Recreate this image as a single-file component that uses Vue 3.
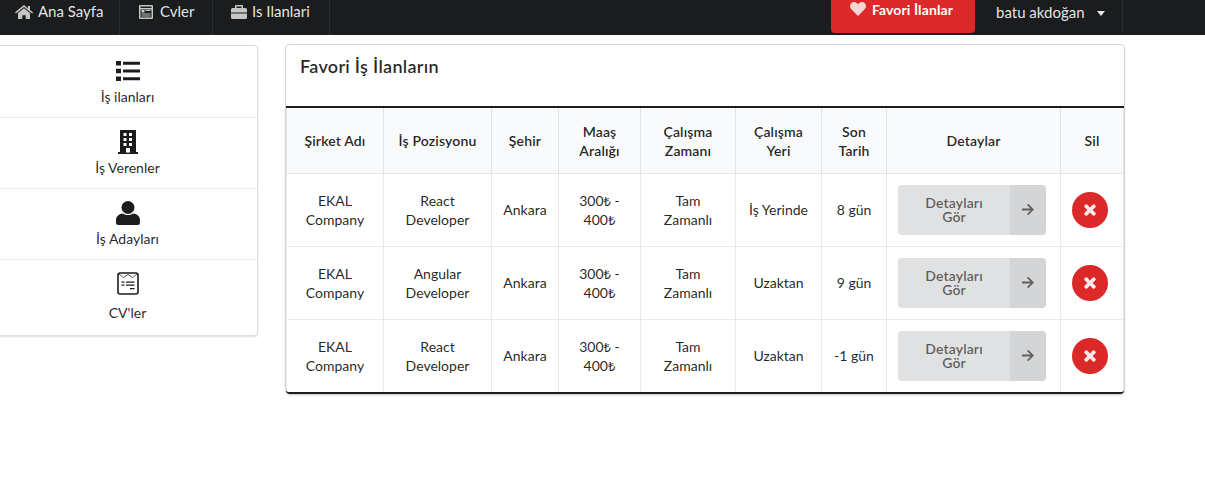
<template>
  <div class="page">
    <nav class="topbar">
      <a class="nav-item first">
        <svg class="nav-icon" width="18" height="14" viewBox="0 0 18 14"><path d="M9 0 0 7.300l.9 1.100L9 1.900l8.100 6.500.9-1.100-3-2.400V1h-2.200v2.500z" /><path d="M9 3.200 3 8.100V14h4.300v-3.800h3.400V14H15V8.100z" /></svg>
        Ana Sayfa
      </a>
      <a class="nav-item second">
        <svg class="nav-icon" width="14" height="14" viewBox="0 0 14 14"><path fill-rule="evenodd" d="M1 0h12a1 1 0 0 1 1 1v12a1 1 0 0 1-1 1H1a1 1 0 0 1-1-1V1a1 1 0 0 1 1-1zm.5 1.500v1.500h11V1.500zm0 3v8h11v-8z" /><path d="M2.500 5h3v2.500h-3zM6.500 5h5v1h-5zM2.500 8.500h9v1h-9zM2.500 10.500h9v1h-9z" /></svg>
        Cvler
      </a>
      <a class="nav-item third">
        <svg class="nav-icon" width="16" height="14" viewBox="0 0 16 14"><path fill-rule="evenodd" d="M5 0h6a1 1 0 0 1 1 1v2h2.500A1.500 1.500 0 0 1 16 4.500V7.500H0V4.500A1.500 1.500 0 0 1 1.500 3H4V1a1 1 0 0 1 1-1zm.5 1.500V3h5V1.500z" /><path d="M0 8.500h16v4a1.500 1.500 0 0 1-1.500 1.500h-13A1.500 1.500 0 0 1 0 12.500z" /></svg>
        Is Ilanlari
      </a>
      <div class="nav-right">
        <button class="fav-btn">
          <svg width="16" height="14" viewBox="0 0 16 14"><path d="M8 14 1.300 7.200C-.4 5.400-.4 2.700 1.200 1.200 2.800-.4 5.500-.3 7 1.200l1 1 1-1c1.500-1.500 4.200-1.600 5.800 0 1.600 1.500 1.600 4.200-.1 6z" /></svg>
          Favori İlanlar
        </button>
        <div class="user-menu">
          <span>batu akdoğan</span>
          <i class="caret"></i>
        </div>
      </div>
    </nav>

    <div class="content">
      <aside class="side-menu">
        <a v-for="item in menu" :key="item.label" class="side-item" :class="item.cls">
          <svg v-if="item.icon === 'list'" width="24" height="20" viewBox="0 0 24 20"><path d="M0 0h5v4.500H0zM7 .7h17v3H7zM0 7.700h5v4.500H0zM7 8.500h17v3H7zM0 15.500h5V20H0zM7 16.300h17v3H7z" /></svg>
          <svg v-else-if="item.icon === 'building'" width="20" height="24" viewBox="0 0 20 24"><path fill-rule="evenodd" d="M2 0h16v22h2v2H0v-2h2zm3.500 3v3h3V3zm5.500 0v3h3V3zM5.500 8v3h3V8zm5.500 0v3h3V8zm-5.500 5v3h3v-3zm5.500 0v3h3v-3zM8 18v4.500h4V18z" /></svg>
          <svg v-else-if="item.icon === 'user'" width="24" height="24" viewBox="0 0 24 24"><circle cx="12" cy="6.500" r="6.500" /><path d="M7 12.500c3 2 7 2 10 0 4 0 7 3 7 6.500v2.500a2.500 2.500 0 0 1-2.500 2.500h-19A2.500 2.500 0 0 1 0 21.500V19c0-3.500 3-6.500 7-6.500z" /></svg>
          <svg v-else class="cv-icon" width="22" height="23" viewBox="0 0 22 23"><rect x="1" y="1" width="20" height="21" rx="2" fill="none" stroke="#1b1c1d" stroke-width="1.600" /><path d="M2 2l4.500 3.500L11 2.500l4.500 3L20 2" fill="none" stroke="#555" /><path d="M4.500 9.500h3v1.200h-3zM9 9.500h8.500v1.200H9zM4.500 12.500h3v1.200h-3zM9 12.500h8.500v1.200H9zM13 16h4.500v1.200H13z" /></svg>
          <span>{{ item.label }}</span>
        </a>
      </aside>

      <section class="card">
        <h2 class="card-title">Favori İş İlanların</h2>
        <table class="fav-table">
          <colgroup>
            <col v-for="w in colWidths" :key="w.id" :style="{ width: w.px + 'px' }" />
          </colgroup>
          <thead>
            <tr>
              <th>Şirket Adı</th>
              <th>İş Pozisyonu</th>
              <th>Şehir</th>
              <th>Maaş Aralığı</th>
              <th>Çalışma Zamanı</th>
              <th>Çalışma Yeri</th>
              <th>Son Tarih</th>
              <th>Detaylar</th>
              <th>Sil</th>
            </tr>
          </thead>
          <tbody>
            <tr v-for="row in rows" :key="row.id">
              <td>EKAL Company</td>
              <td>{{ row.position }}</td>
              <td>Ankara</td>
              <td>
                <span class="salary-line">300<span class="lira">₺</span> -</span>
                <span class="salary-line">400<span class="lira">₺</span></span>
              </td>
              <td>Tam Zamanlı</td>
              <td>{{ row.place }}</td>
              <td>{{ row.deadline }}</td>
              <td>
                <button class="detail-btn">
                  <span class="detail-text">Detayları Gör</span>
                  <span class="detail-arrow">
                    <svg width="13" height="13" viewBox="0 0 13 13"><path d="M0 5.500h8.500L5 2l1.200-1.300 5.800 5.800-5.800 5.800L5 11l3.500-3.500H0z" /></svg>
                  </span>
                </button>
              </td>
              <td>
                <button class="remove-btn">
                  <svg width="12" height="12" viewBox="0 0 12 12"><path d="M3.200.600 6 3.400 8.800.600a1.200 1.200 0 0 1 1.700 0l.9.900a1.200 1.200 0 0 1 0 1.700L8.600 6l2.800 2.800a1.200 1.200 0 0 1 0 1.700l-.9.900a1.200 1.200 0 0 1-1.700 0L6 8.600l-2.800 2.800a1.200 1.200 0 0 1-1.700 0l-.9-.9a1.200 1.200 0 0 1 0-1.700L3.400 6 .6 3.200a1.200 1.200 0 0 1 0-1.700l.9-.9a1.200 1.200 0 0 1 1.700 0z" /></svg>
                </button>
              </td>
            </tr>
          </tbody>
        </table>
      </section>
    </div>
  </div>
</template>

<script setup>
const menu = [
  { label: 'İş ilanları', icon: 'list', cls: 'first-item' },
  { label: 'İş Verenler', icon: 'building', cls: 'mid-item' },
  { label: 'İş Adayları', icon: 'user', cls: 'mid-item' },
  { label: "CV'ler", icon: 'cv', cls: 'last-item' },
]

const colWidths = [97, 108, 67, 82, 95, 86, 65, 174, 64].map((px, id) => ({ id, px }))

const rows = [
  { id: 1, position: 'React Developer', place: 'İş Yerinde', deadline: '8 gün' },
  { id: 2, position: 'Angular Developer', place: 'Uzaktan', deadline: '9 gün' },
  { id: 3, position: 'React Developer', place: 'Uzaktan', deadline: '-1 gün' },
]
</script>

<style>
html,
body {
  margin: 0;
  background: #fff;
  overflow: hidden;
}
</style>

<style scoped>
.page {
  font-family: Lato, "Noto Sans", sans-serif;
  font-size: 14px;
  line-height: 19px;
  color: rgba(0, 0, 0, 0.87);
  width: 1205px;
  height: 492px;
  overflow: hidden;
}

.topbar {
  display: flex;
  height: 35px;
  background: #1b1c1d;
  color: rgba(255, 255, 255, 0.9);
  font-size: 15px;
}

.nav-item {
  display: flex;
  align-items: center;
  gap: 5px;
  height: 35px;
  padding-bottom: 12px;
  box-sizing: border-box;
  border-right: 1px solid rgba(255, 255, 255, 0.08);
}

.nav-item.first {
  width: 120px;
  padding-left: 15px;
}

.nav-item.second {
  width: 93px;
  padding-left: 19px;
  gap: 7px;
}

.nav-item.third {
  width: 117px;
  padding-left: 18px;
}

.nav-icon {
  fill: rgba(255, 255, 255, 0.75);
  flex: none;
}

.nav-right {
  display: flex;
  margin-left: auto;
  margin-right: 82px;
}

.fav-btn {
  display: flex;
  align-items: center;
  justify-content: center;
  gap: 6px;
  width: 144px;
  height: 33px;
  padding: 0 3px 15px 0;
  border: 0;
  border-radius: 0 0 4px 4px;
  background: #db2828;
  color: #fff;
  font: 700 14px/19px Lato, "Noto Sans", sans-serif;
  letter-spacing: 0.1px;
}

.fav-btn svg {
  fill: rgba(255, 255, 255, 0.8);
}

.user-menu {
  display: flex;
  align-items: center;
  width: 148px;
  height: 33px;
  padding-left: 21px;
  padding-bottom: 9px;
  box-sizing: border-box;
  border-right: 1px solid rgba(255, 255, 255, 0.08);
}

.caret {
  width: 0;
  height: 0;
  margin-left: 12px;
  margin-top: 2px;
  border-left: 4.500px solid transparent;
  border-right: 4.500px solid transparent;
  border-top: 5px solid rgba(255, 255, 255, 0.9);
}

.content {
  display: flex;
  align-items: flex-start;
  padding-top: 9px;
}

.side-menu {
  flex: none;
  width: 261px;
  margin-left: -3px;
  margin-top: 1px;
  box-sizing: border-box;
  background: #fff;
  border: 1px solid rgba(34, 36, 38, 0.15);
  border-radius: 4px;
  box-shadow: 0 1px 2px 0 rgba(34, 36, 38, 0.15);
}

.side-item {
  display: flex;
  flex-direction: column;
  align-items: center;
  box-sizing: border-box;
  border-bottom: 1px solid rgba(34, 36, 38, 0.1);
  fill: #1b1c1d;
}

.side-item:last-child {
  border-bottom: 0;
}

.side-item svg {
  display: block;
  margin-bottom: 4px;
}

.first-item {
  height: 72px;
  padding-top: 15px;
}

.side-item.first-item svg {
  margin-bottom: 6px;
}

.mid-item {
  height: 71px;
  padding-top: 12px;
}

.last-item {
  height: 75px;
  padding-top: 12px;
}

.side-item .cv-icon {
  margin-bottom: 8px;
}

.card {
  flex: none;
  width: 838px;
  height: 349px;
  margin-left: 28px;
  margin-top: 1px;
  background: #fff;
  border-radius: 4px;
  box-shadow: 0 1px 3px 0 #d4d4d5, 0 0 0 1px #d4d4d5;
}

.card-title {
  margin: 0;
  height: 61px;
  padding: 10px 14px 0;
  box-sizing: border-box;
  font-size: 18px;
  line-height: 22px;
  font-weight: 600;
  letter-spacing: 0.3px;
  color: rgba(0, 0, 0, 0.85);
}

.fav-table {
  width: 838px;
  table-layout: fixed;
  border-collapse: separate;
  border-spacing: 0;
  border-top: 2px solid #1b1c1d;
  border-bottom: 2px solid #1b1c1d;
  border-radius: 0 0 4px 4px;
}

.fav-table th,
.fav-table td {
  padding: 0 10px;
  text-align: center;
  vertical-align: middle;
  border-left: 1px solid rgba(34, 36, 38, 0.1);
  box-sizing: border-box;
}

.fav-table th:last-child,
.fav-table td:last-child {
  border-right: 1px solid rgba(34, 36, 38, 0.1);
}

.fav-table th {
  height: 66px;
  font-weight: 600;
  letter-spacing: 0.15px;
  background: #f9fafb;
  border-bottom: 1px solid rgba(34, 36, 38, 0.1);
}

.fav-table td {
  height: 73px;
  padding-bottom: 1px;
  border-bottom: 1px solid rgba(34, 36, 38, 0.1);
}

.fav-table tr:last-child td {
  height: 72px;
  border-bottom: 0;
}

.salary-line {
  display: block;
}

.lira {
  font-family: "Noto Sans", sans-serif;
  font-size: 13px;
  line-height: 1;
}

.detail-btn {
  display: flex;
  width: 148px;
  height: 50px;
  margin: 0 0 0 1px;
  padding: 0;
  border: 0;
  border-radius: 4px;
  overflow: hidden;
  background: #e0e1e2;
  color: rgba(0, 0, 0, 0.6);
  font: 600 14px/14px Lato, "Noto Sans", sans-serif;
  letter-spacing: 0.15px;
}

.detail-text {
  flex: 1;
  align-self: center;
  padding: 0 20px;
}

.detail-arrow {
  display: flex;
  align-items: center;
  justify-content: center;
  width: 36px;
  height: 50px;
  background: rgba(0, 0, 0, 0.05);
  fill: rgba(0, 0, 0, 0.55);
}

.remove-btn {
  display: flex;
  align-items: center;
  justify-content: center;
  width: 36px;
  height: 36px;
  margin: 0 0 0 1px;
  padding: 0;
  border: 0;
  border-radius: 50%;
  background: #db2828;
  fill: rgba(255, 255, 255, 0.9);
}
</style>
